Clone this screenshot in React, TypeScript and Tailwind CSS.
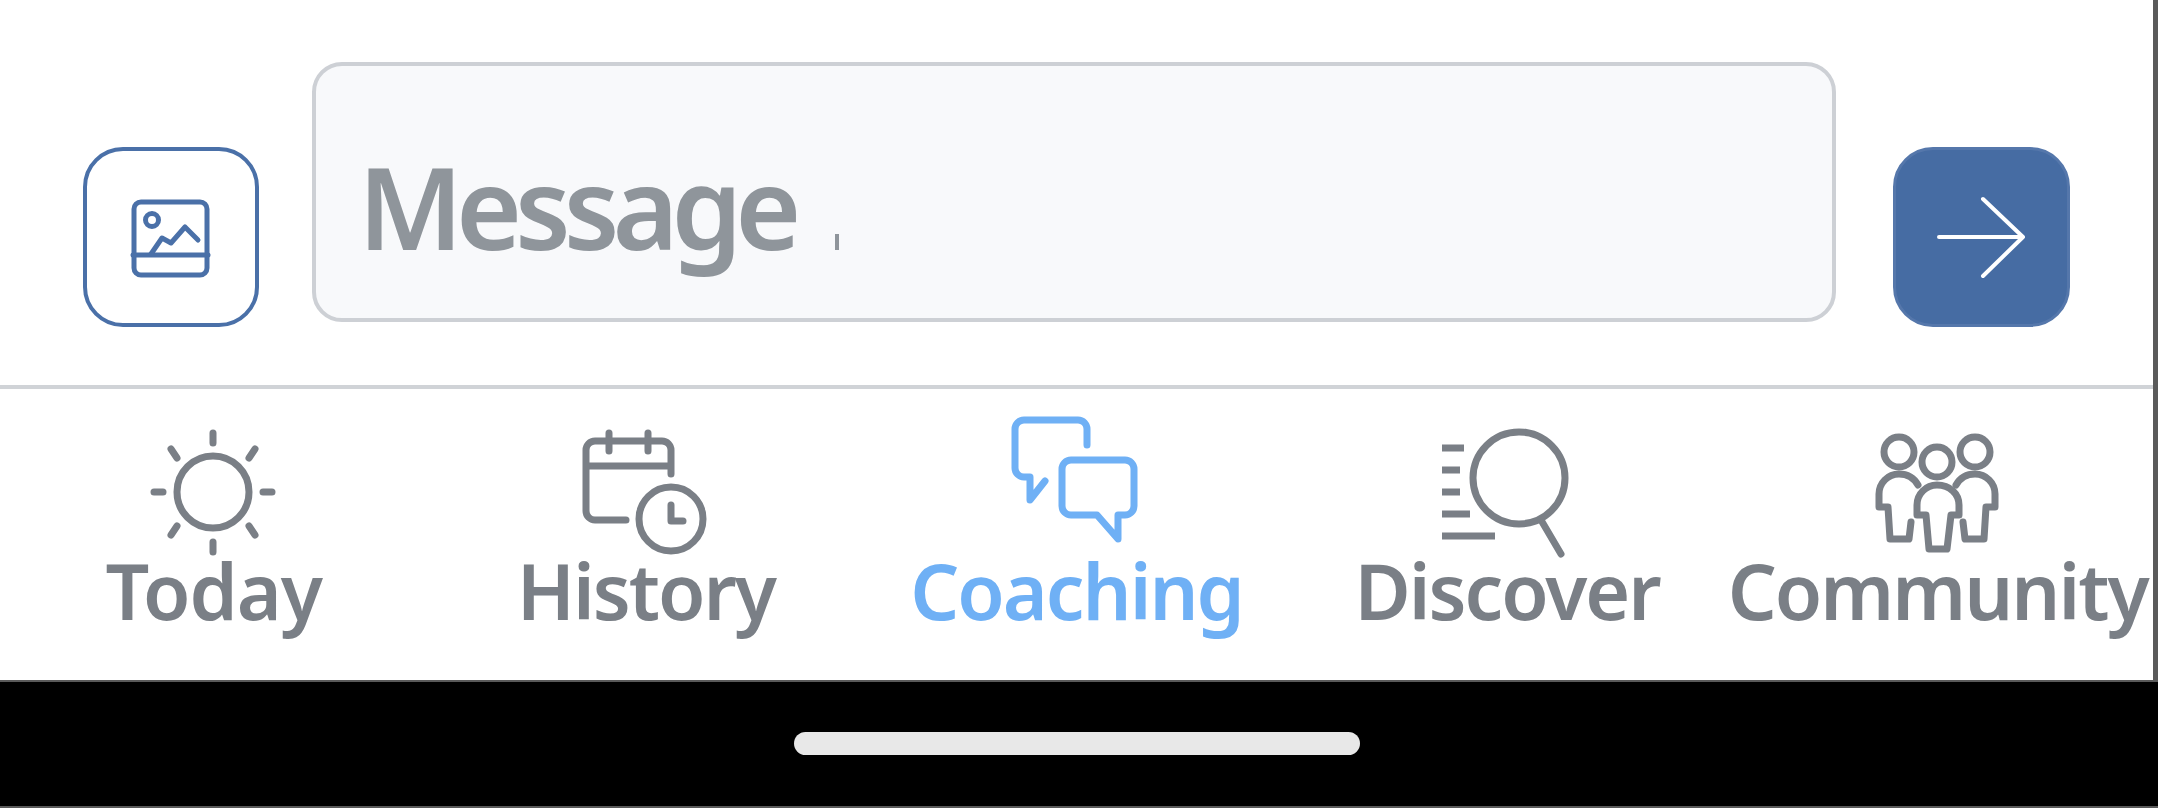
import type { ReactNode } from 'react';

// icons are drawn in page pixels, so the viewBox of each one starts at its own spot
function NavIcon({ centerX, children }: { centerX: number; children: ReactNode }) {
  return (
    <svg
      viewBox={`${centerX - 100} 412 200 146`}
      className="h-[146px] w-[200px]"
      fill="none"
      stroke="currentColor"
      strokeWidth={7}
      strokeLinecap="round"
      strokeLinejoin="round"
    >
      {children}
    </svg>
  );
}

const NAV_ITEMS: { label: string; centerX: number; active?: boolean; labelClass: string; icon: ReactNode }[] = [
  {
    label: 'Today',
    centerX: 215,
    labelClass: 'mr-[3px] tracking-[-1px]',
    icon: (
      <>
        <circle cx="213" cy="492" r="36" />
        <path d="M213 433v10M213 542v10M154 492h9M263 492h9M171 449l6 9M255 449l-6 9M171 535l6-9M255 535l-6-9" />
      </>
    ),
  },
  {
    label: 'History',
    centerX: 646,
    labelClass: 'tracking-[-2px]',
    icon: (
      <>
        <path d="M626 520h-31a9 9 0 0 1-9-9v-61a9 9 0 0 1 9-9h67a9 9 0 0 1 9 9v24M586 466h85M609 433v18M648 433v18" />
        <circle cx="671" cy="519" r="32" />
        <path d="M671 505v16h12" />
      </>
    ),
  },
  {
    label: 'Coaching',
    centerX: 1077,
    active: true,
    labelClass: 'tracking-[-2px]',
    icon: (
      <>
        <path d="M1088 445v-16a9 9 0 0 0-9-9h-54a9 9 0 0 0-9 9v39a9 9 0 0 0 9 9h6v23l15-19" />
        <path d="M1072 460h54a9 9 0 0 1 9 9v37a9 9 0 0 1-9 9h-7v24l-21-24h-26a9 9 0 0 1-9-9v-37a9 9 0 0 1 9-9z" />
      </>
    ),
  },
  {
    label: 'Discover',
    centerX: 1508,
    labelClass: 'tracking-[-2px]',
    icon: (
      <>
        <circle cx="1520" cy="478" r="46" />
        <path d="M1542 520l20 34" />
        <path strokeLinecap="butt" d="M1443 448h22M1443 470h18M1443 492h18M1443 514h28M1443 536h53" />
      </>
    ),
  },
  {
    label: 'Community',
    centerX: 1938,
    labelClass: 'tracking-[-2px]',
    icon: (
      <>
        <circle cx="1899" cy="452" r="15" />
        <circle cx="1937" cy="462" r="15" />
        <circle cx="1975" cy="452" r="15" />
        <path d="M1918 485c-4-7-11-11-19-11-11 0-20 9-20 20v13h9l2 32h19l2-17" />
        <path d="M1956 485c4-7 11-11 19-11 11 0 20 9 20 20v13h-9l-2 32h-19l-2-17" />
        <path d="M1937 485c-11 0-20 9-20 20v10h9l3 34h18l4-34h8v-10c0-11-9-20-22-20z" />
      </>
    ),
  },
];

export default function App() {
  return (
    <div className="h-[808px] w-[2158px] overflow-hidden border-b-2 border-[#5a5a5a] bg-black font-['Noto_Sans',sans-serif]">
      <div className="h-[682px] w-[2158px] border-r-[5px] border-b-2 border-[#5a5a5a] bg-white">
        {/* Composer */}
        <div className="flex h-[385px] items-end pr-[83px] pb-[58px] pl-[83px] blur-[0.7px]">
          <button className="mr-[53px] flex h-[180px] w-[176px] shrink-0 items-center justify-center rounded-[40px] border-4 border-[#4a70a8] bg-white">
            <svg viewBox="130 195 84 84" className="h-[84px] w-[84px]" fill="none" stroke="#4a70a8" strokeWidth={5} strokeLinecap="round" strokeLinejoin="round">
              <rect x="135" y="202" width="73" height="73" rx="7" />
              <path d="M134 255h75" />
              <circle cx="153" cy="220" r="6.5" />
              <path d="M152 254l11-16 9 5 14-16 13 13" />
            </svg>
          </button>
          <div className="relative mb-[5px] flex h-[260px] flex-1 items-end rounded-[30px] border-4 border-[#cdd0d5] bg-[#f8f9fb] pb-[27px] pl-[42px] text-[113px] leading-[170px] font-semibold tracking-[-7px] text-[#8f959b]">
            Message
            <span className="absolute top-[168px] left-[519px] h-[16px] w-[4px] bg-[#8f959b]" />
          </div>
          <button className="ml-[57px] flex h-[180px] w-[177px] shrink-0 items-center justify-center rounded-[40px] border-[3px] border-[#5577ab] bg-[#466ca3]">
            <svg viewBox="1935 195 95 86" className="h-[86px] w-[95px]" fill="none" stroke="#ffffff" strokeWidth={4} strokeLinecap="round" strokeLinejoin="round">
              <path d="M1940 238h84M1984 200l40 38-40 39" />
            </svg>
          </button>
        </div>

        {/* Tab bar */}
        <nav className="grid grid-cols-5 border-t-[4px] border-[#d0d3d7] pt-[23px] blur-[0.7px]">
          {NAV_ITEMS.map((item) => (
            <div
              key={item.label}
              className={`flex flex-col items-center ${item.active ? 'text-[#6fb0f5]' : 'text-[#7a7f86]'}`}
            >
              <NavIcon centerX={item.centerX}>{item.icon}</NavIcon>
              <span className={`text-[77px] leading-[66px] font-semibold ${item.labelClass}`}>{item.label}</span>
            </div>
          ))}
        </nav>
      </div>

      {/* Home indicator */}
      <div className="flex justify-center pt-[50px] pr-[5px]">
        <div className="h-[23px] w-[566px] rounded-full bg-[#e8e8e8] blur-[0.7px]" />
      </div>
    </div>
  );
}
